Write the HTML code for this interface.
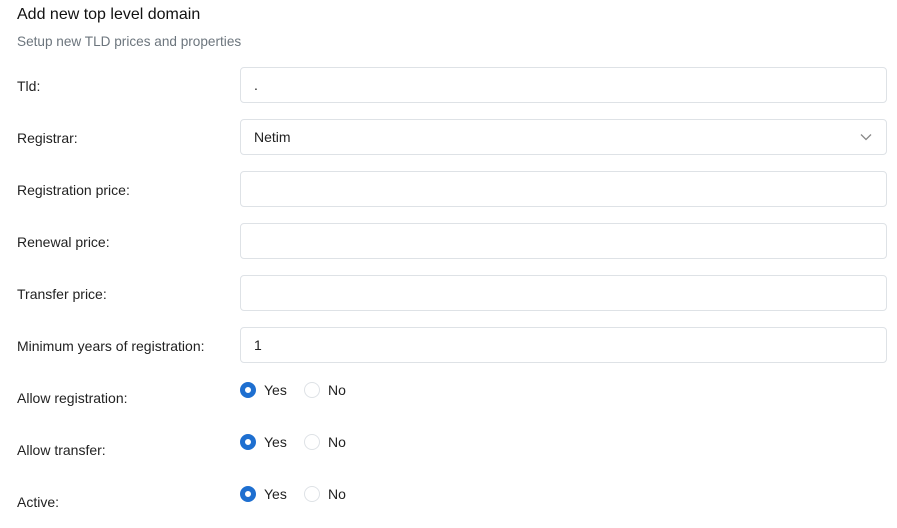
<!DOCTYPE html>
<html><head><meta charset="utf-8"><style>
body{margin:0;width:897px;height:528px;background:#fff;font-family:"Liberation Sans",sans-serif;position:relative;overflow:hidden;color:#212529}
.a{position:absolute;white-space:nowrap}
h1{position:absolute;left:17px;top:6px;margin:0;font-size:16px;font-weight:normal;color:#111}
.sub{left:17px;top:34px;font-size:13.6px;color:#6c757d}
.lbl{left:17px;font-size:14px;color:#222}
.inp{position:absolute;left:240px;width:645px;height:34px;border:1px solid #dee2e6;border-radius:4px;box-sizing:content-box}
.inp span{position:absolute;left:13px;top:9px;font-size:14px;color:#222}
.r{position:absolute;width:16px;height:16px;border-radius:50%;box-sizing:border-box}
.on{background:#fff;border:5px solid #1e6fd0;}
.off{border:1px solid #dee2e6;background:#fff}
.t{position:absolute;font-size:14px;color:#222}
</style></head><body>
<h1>Add new top level domain</h1>
<div class="a sub">Setup new TLD prices and properties</div>

<div class="a lbl" style="top:78px">Tld:</div>
<div class="inp" style="top:67px"><span>.</span></div>

<div class="a lbl" style="top:130px">Registrar:</div>
<div class="inp" style="top:119px"><span>Netim</span>
<svg style="position:absolute;right:14px;top:13px" width="12" height="8" viewBox="0 0 12 8"><path d="M1 1.5 6 6.5 11 1.5" fill="none" stroke="#888" stroke-width="1.3"/></svg></div>

<div class="a lbl" style="top:182px">Registration price:</div>
<div class="inp" style="top:171px"></div>

<div class="a lbl" style="top:234px">Renewal price:</div>
<div class="inp" style="top:223px"></div>

<div class="a lbl" style="top:286px">Transfer price:</div>
<div class="inp" style="top:275px"></div>

<div class="a lbl" style="top:338px">Minimum years of registration:</div>
<div class="inp" style="top:327px"><span>1</span></div>

<div class="a lbl" style="top:390px">Allow registration:</div>
<div class="r on" style="left:240px;top:382px"></div><div class="t" style="left:264px;top:382px">Yes</div>
<div class="r off" style="left:304px;top:382px"></div><div class="t" style="left:328px;top:382px">No</div>

<div class="a lbl" style="top:442px">Allow transfer:</div>
<div class="r on" style="left:240px;top:434px"></div><div class="t" style="left:264px;top:434px">Yes</div>
<div class="r off" style="left:304px;top:434px"></div><div class="t" style="left:328px;top:434px">No</div>

<div class="a lbl" style="top:494px">Active:</div>
<div class="r on" style="left:240px;top:486px"></div><div class="t" style="left:264px;top:486px">Yes</div>
<div class="r off" style="left:304px;top:486px"></div><div class="t" style="left:328px;top:486px">No</div>
</body></html>
